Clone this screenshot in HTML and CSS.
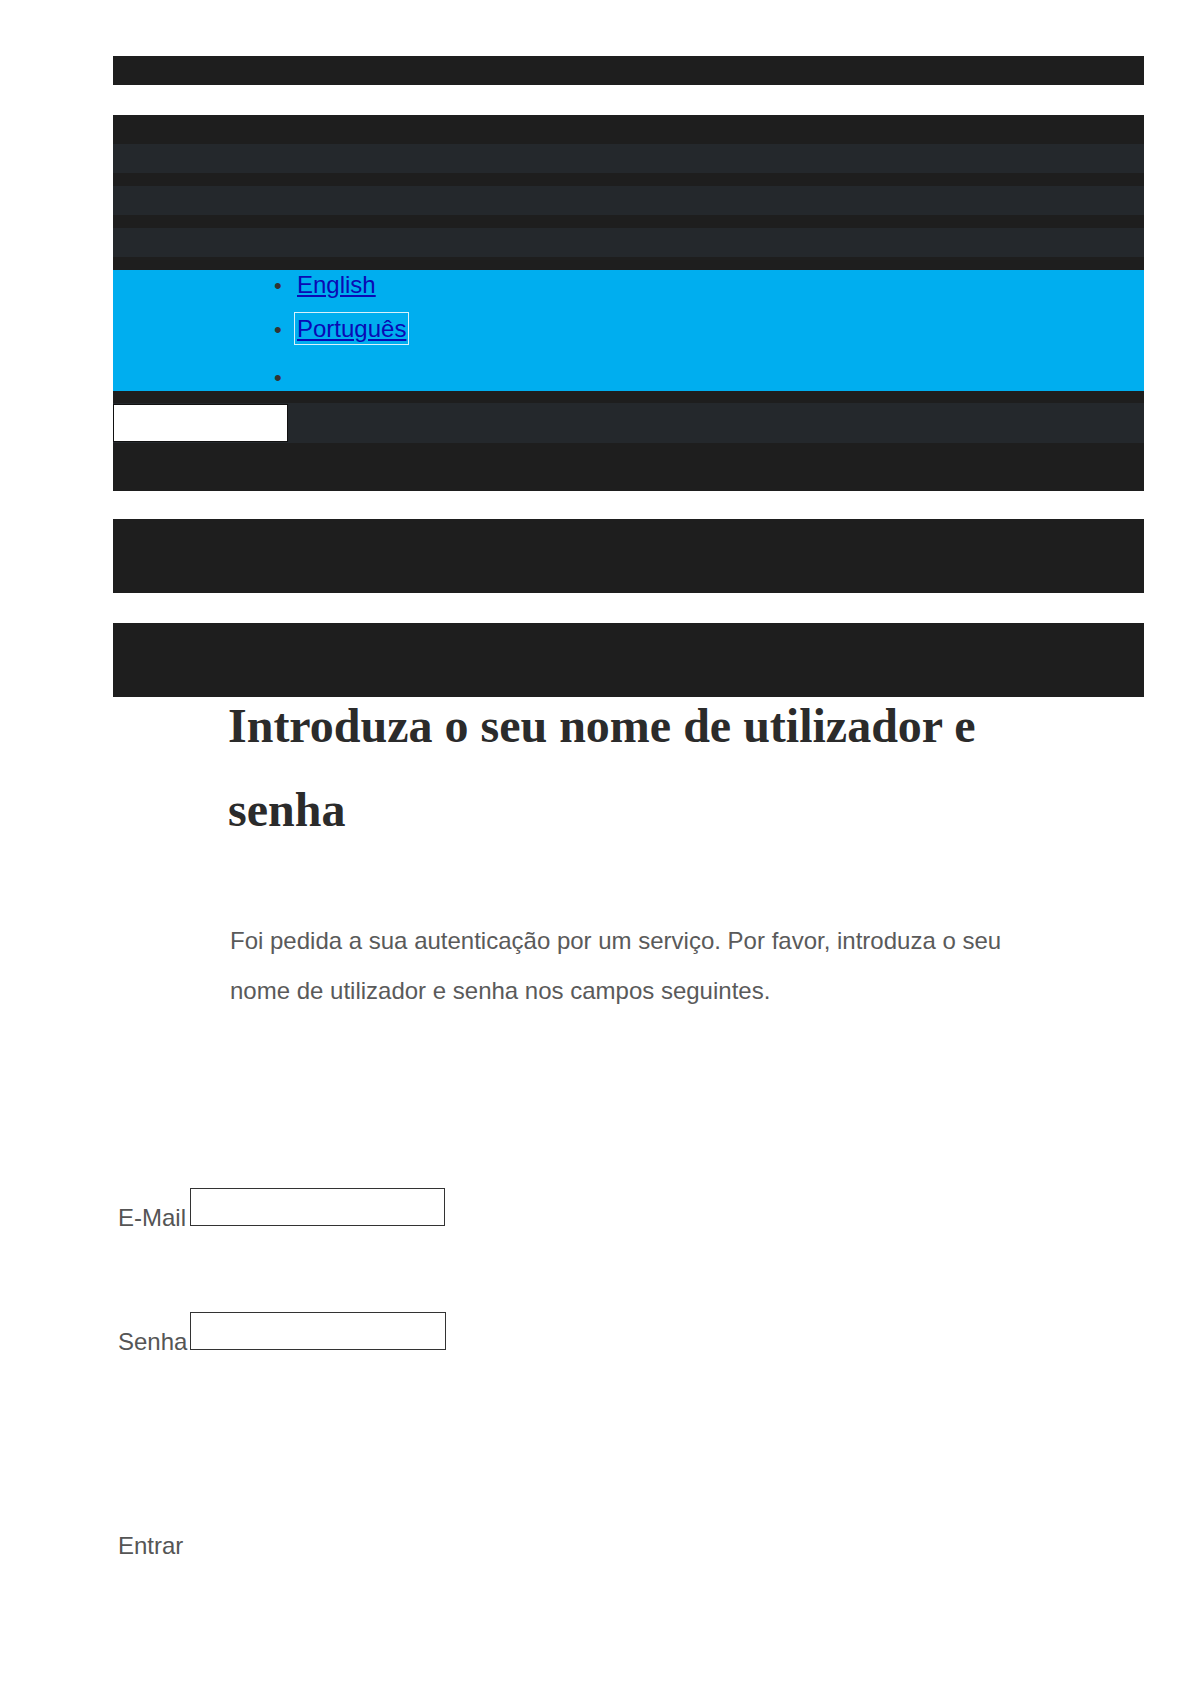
FILE: index.html
```html
<!DOCTYPE html>
<html lang="pt">
<head>
<meta charset="utf-8">
<title>Autenticação</title>
<link rel="stylesheet" href="styles.css">
</head>
<body>
<div class="page">
  <div class="bar bar-top"></div>

  <nav class="nav">
    <div class="stripe"></div>
    <div class="stripe"></div>
    <div class="stripe"></div>
    <ul class="lang">
      <li class="lang-item"><a href="#">English</a></li>
      <li class="lang-item lang-current"><a href="#" class="focused">Português</a></li>
      <li class="lang-item lang-empty"></li>
    </ul>
    <div class="search-row">
      <div class="search-box"></div>
    </div>
  </nav>

  <div class="bar bar-tall bar-a"></div>
  <div class="bar bar-tall bar-b"></div>
</div>

<div class="content">
  <h1 class="title">Introduza o seu nome de utilizador e senha</h1>
  <p class="intro">Foi pedida a sua autenticação por um serviço. Por favor, introduza o seu nome de utilizador e senha nos campos seguintes.</p>
</div>

<form class="login">
  <div class="field field-email">
    <label class="field-label">E-Mail</label>
    <span class="field-input"></span>
  </div>
  <div class="field field-pass">
    <label class="field-label">Senha</label>
    <span class="field-input field-input-wide"></span>
  </div>
  <div class="submit">Entrar</div>
</form>
</body>
</html>
```

FILE: styles.css
```css
html, body {
  margin: 0;
  padding: 0;
  background: #ffffff;
}

body {
  font-family: "Liberation Sans", Arial, sans-serif;
  color: #4d4d4d;
}

.page {
  margin-left: 113px;
  width: 1031px;
  padding-top: 56px;
}

.bar {
  background: #1e1e1e;
}

.bar-top {
  height: 29px;
}

.nav {
  margin-top: 30px;
  background: #1e1e1e;
  padding-top: 29px;
  padding-bottom: 48px;
}

.stripe {
  height: 29px;
  background: #24282c;
  margin-bottom: 13px;
}

.lang {
  margin: 0 0 12px 0;
  padding: 1px 0 0 184px;
  background: #00aeef;
  height: 121px;
  box-sizing: border-box;
  list-style: disc;
  font-size: 24px;
  color: #333;
}

.lang-item::marker {
  content: "\2022\2002\2009";
  font-size: 22px;
  color: #333;
}

.lang-item a {
  color: #0a0ab4;
  text-decoration: underline;
}

.lang-current {
  margin-top: 16px;
}

.lang-empty {
  margin-top: 20px;
  height: 27px;
}

.focused {
  outline: 1px solid #d9f1fb;
  outline-offset: 2px;
}

.search-row {
  height: 40px;
  background: #24282c;
  display: flex;
  align-items: center;
}

.search-box {
  width: 173px;
  height: 36px;
  background: #ffffff;
  border: 1px solid #111;
}

.bar-tall {
  height: 74px;
}

.bar-a {
  margin-top: 28px;
}

.bar-b {
  margin-top: 30px;
}

.content {
  margin-left: 230px;
  width: 800px;
}

.title {
  font-family: "Liberation Serif", "Times New Roman", serif;
  font-weight: bold;
  font-size: 48px;
  line-height: 84px;
  color: #2b2b2b;
  margin: -13px 0 0 -2px;
}

.intro {
  font-size: 24px;
  line-height: 50px;
  color: #5a5a5a;
  margin: 64px 0 0 0;
}

.login {
  margin-left: 118px;
  padding-top: 172px;
  padding-bottom: 120px;
}

.field {
  display: flex;
  align-items: flex-end;
}

.field-pass {
  margin-top: 86px;
}

.field-label {
  width: 72px;
  font-size: 24px;
  line-height: 16px;
  color: #555555;
  white-space: nowrap;
}

.field-input {
  display: block;
  width: 253px;
  height: 36px;
  border: 1px solid #333;
}

.field-input-wide {
  width: 254px;
}

.submit {
  margin-top: 182px;
  font-size: 24px;
  color: #555555;
}
```
